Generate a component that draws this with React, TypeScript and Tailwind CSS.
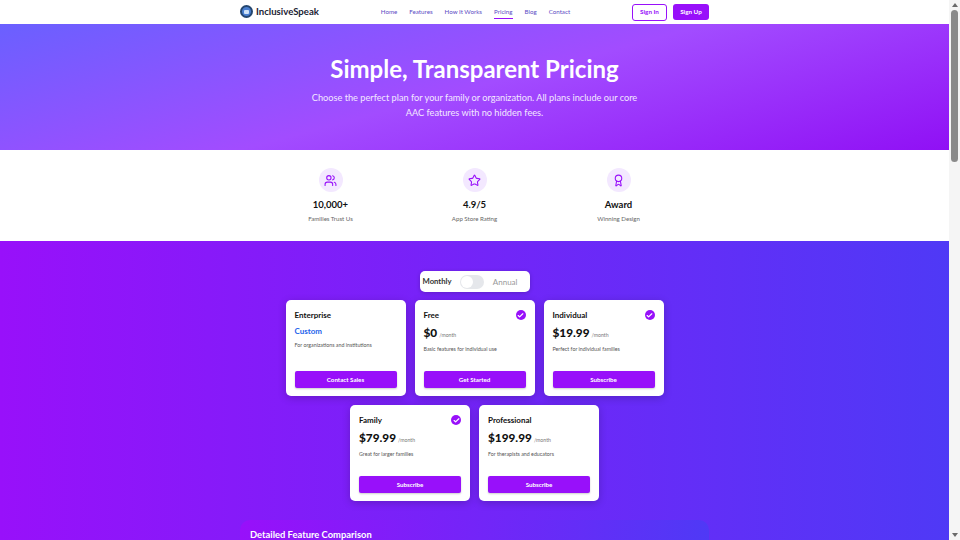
import { Award, Check, Star, Users } from "lucide-react";

const navLinks = ["Home", "Features", "How It Works", "Pricing", "Blog", "Contact"];

const stats = [
  { icon: Users, value: "10,000+", label: "Families Trust Us" },
  { icon: Star, value: "4.9/5", label: "App Store Rating" },
  { icon: Award, value: "Award", label: "Winning Design" },
];

const plans = [
  { name: "Enterprise", price: "Custom", desc: "For organizations and institutions", cta: "Contact Sales", custom: true },
  { name: "Free", price: "$0", desc: "Basic features for individual use", cta: "Get Started", checked: true },
  { name: "Individual", price: "$19.99", desc: "Perfect for individual families", cta: "Subscribe", checked: true },
  { name: "Family", price: "$79.99", desc: "Great for larger families", cta: "Subscribe", checked: true },
  { name: "Professional", price: "$199.99", desc: "For therapists and educators", cta: "Subscribe" },
];

type Plan = (typeof plans)[number];

function PlanCard({ plan }: { plan: Plan }) {
  return (
    <div className="w-[120px] h-[96px] flex flex-col bg-white rounded-[5px] pt-[10px] px-[9px] pb-[8px] shadow-[0_2px_8px_rgba(0,0,0,0.2)]">
      <div className="flex items-center justify-between h-[10px]">
        <h3 className="text-[8px] leading-[10px] font-bold text-[#111]">{plan.name}</h3>
        {plan.checked && (
          <span className="w-[10px] h-[10px] rounded-full bg-[#9810fa] flex items-center justify-center">
            <Check size={7} strokeWidth={4} className="text-white" />
          </span>
        )}
      </div>
      {plan.custom ? (
        <p className="mt-[5px] text-[8px] leading-[12px] font-bold text-[#2563eb]">{plan.price}</p>
      ) : (
        <p className="mt-[4px] flex items-baseline gap-[2px] leading-[17px]">
          <span className="text-[11.8px] font-black text-[#111]">{plan.price}</span>
          <span className="text-[5.2px] text-[#777]">/month</span>
        </p>
      )}
      <p className={`${plan.custom ? "mt-[4px]" : "mt-[1px]"} text-[5.3px] leading-[8px] text-[#555]`}>{plan.desc}</p>
      <button className="mt-auto h-[17px] w-full rounded-[2px] bg-[#9810fa] text-white text-[6.2px] font-bold shadow-[0_1px_2px_rgba(0,0,0,0.2)]">
        {plan.cta}
      </button>
    </div>
  );
}

export default function App() {
  return (
    <div className="flex w-[960px] h-[540px] overflow-hidden bg-white font-['Lato','Open_Sans',sans-serif]">
      <div className="w-[949px] shrink-0">
        <header className="h-[24px] bg-white flex items-center justify-between pl-[240px] pr-[240px]">
          <div className="flex items-center gap-[3px]">
            <span className="w-[13px] h-[13px] rounded-full bg-[#4a7fd0] border-[2px] border-[#24466f] flex items-center justify-center">
              <span className="w-[5px] h-[4px] rounded-[1px] bg-[#cfe2f7]" />
            </span>
            <span className="text-[9.6px] font-bold text-[#1a2233]">InclusiveSpeak</span>
          </div>
          <nav className="flex items-center gap-[12px]">
            {navLinks.map((link) => (
              <a
                key={link}
                className={`text-[6.2px] leading-[12px] text-[#5b4bc4] ${link === "Pricing" ? "border-b border-[#9810fa]" : "border-b border-transparent"}`}
              >
                {link}
              </a>
            ))}
          </nav>
          <div className="flex items-center gap-[6px]">
            <button className="w-[35px] h-[17px] rounded-[3px] border border-[#9810fa] text-[#9810fa] text-[6.3px] font-bold">
              Sign In
            </button>
            <button className="w-[36px] h-[16px] rounded-[3px] bg-[#9810fa] text-white text-[6.3px] font-bold">
              Sign Up
            </button>
          </div>
        </header>

        <section className="h-[126px] bg-[linear-gradient(165deg,#6a60ff_0%,#a24cff_50%,#9010f5_100%)] flex flex-col items-center pt-[29px]">
          <h1 className="text-[24px] leading-[32px] font-bold text-white">Simple, Transparent Pricing</h1>
          <p className="mt-[5px] w-[340px] text-center text-[9.2px] leading-[15px] text-[#f3e8ff]">
            Choose the perfect plan for your family or organization. All plans include our core AAC features with no
            hidden fees.
          </p>
        </section>

        <section className="h-[91px] bg-white flex justify-center gap-[94px] pt-[18px]">
          {stats.map(({ icon: Icon, value, label }) => (
            <div key={label} className="w-[50px] flex flex-col items-center">
              <span className="w-[24px] h-[24px] rounded-full bg-[#f3e8ff] flex items-center justify-center">
                <Icon size={13} className="text-[#9810fa]" />
              </span>
              <p className="mt-[6px] text-[9.5px] leading-[14px] font-bold text-[#111] whitespace-nowrap">{value}</p>
              <p className="mt-[2px] text-[6.1px] leading-[9px] text-[#666] whitespace-nowrap">{label}</p>
            </div>
          ))}
        </section>

        <section className="h-[299px] bg-[linear-gradient(to_right,#9810fa,#4f39f6)] flex flex-col items-center pt-[30px]">
          <div className="shrink-0 w-[110px] h-[21px] bg-white rounded-[5px] flex items-center justify-between pl-[3px] pr-[12px] shadow-[0_1px_4px_rgba(0,0,0,0.2)]">
            <span className="text-[7.7px] font-bold text-[#333]">Monthly</span>
            <span className="w-[24px] h-[14px] rounded-full bg-[#e5e7eb] flex items-center px-[1px]">
              <span className="w-[12px] h-[12px] rounded-full bg-white" />
            </span>
            <span className="text-[8px] text-[#999]">Annual</span>
          </div>
          <div className="shrink-0 mt-[8px] w-[400px] flex flex-wrap justify-center gap-[9px]">
            {plans.map((plan) => (
              <PlanCard key={plan.name} plan={plan} />
            ))}
          </div>
          <div className="shrink-0 mt-[19px] w-[469px] h-[40px] rounded-t-[10px] bg-[linear-gradient(to_right,#9810fa,#4f39f6)] px-[10px] pt-[8px]">
            <h2 className="text-[9.4px] leading-[14px] font-bold text-white">Detailed Feature Comparison</h2>
          </div>
        </section>
      </div>

      <aside className="w-[11px] shrink-0 bg-[#f5f5f5] flex flex-col items-center justify-between py-[3px]">
        <div className="flex flex-col items-center w-full">
          <span className="w-0 h-0 border-x-[3px] border-x-transparent border-b-[4px] border-b-[#6a6a6a]" />
          <span className="mt-[3px] w-[7px] h-[152px] rounded-full bg-[#8a8a8a]" />
        </div>
        <span className="w-0 h-0 border-x-[3px] border-x-transparent border-t-[4px] border-t-[#6a6a6a]" />
      </aside>
    </div>
  );
}
